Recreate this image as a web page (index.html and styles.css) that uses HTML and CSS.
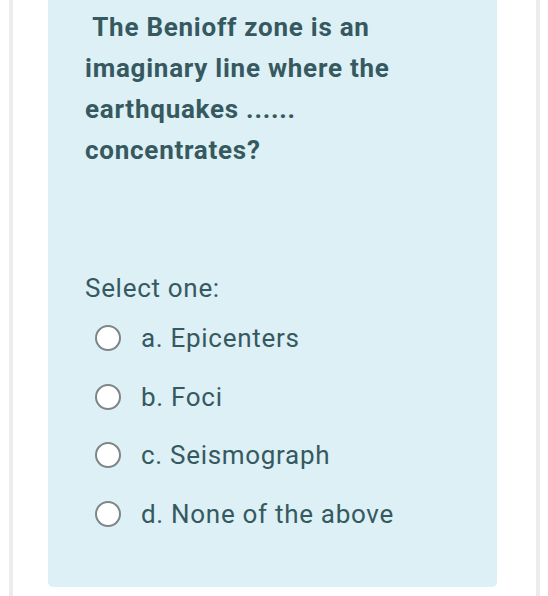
FILE: index.html
```html
<!DOCTYPE html>
<html>
<head>
<meta charset="utf-8">
<link rel="stylesheet" href="styles.css">
</head>
<body>
<div class="card">
  <div class="formulation">
    <div class="qtext">&nbsp;The Benioff zone is an imaginary line where the earthquakes ...... concentrates?</div>
    <div class="prompt">Select one:</div>
    <div class="answers">
      <label class="opt"><span class="radio"></span><span class="label">a. Epicenters</span></label>
      <label class="opt"><span class="radio"></span><span class="label">b. Foci</span></label>
      <label class="opt"><span class="radio"></span><span class="label">c. Seismograph</span></label>
      <label class="opt"><span class="radio"></span><span class="label">d. None of the above</span></label>
    </div>
  </div>
</div>
</body>
</html>
```
FILE: styles.css
```css
html, body {
  margin: 0;
  padding: 0;
  background: #ffffff;
}
body {
  font-family: Roboto, "Liberation Sans", sans-serif;
  color: #36595f;
}
.card {
  margin-left: 9px;
  width: 523px;
  height: 596px;
  border-left: 4px solid #ececec;
  border-right: 4px solid #ececec;
  box-sizing: content-box;
}
.formulation {
  margin-left: 35px;
  width: 449px;
  height: 587px;
  background: #dcf0f6;
  border-radius: 0 0 5px 5px;
  box-sizing: border-box;
  padding: 7px 10px 0 37px;
}
.qtext {
  font-weight: 700;
  font-size: 26px;
  letter-spacing: 0.75px;
  line-height: 41px;
  width: 330px;
}
.prompt {
  margin-top: 102px;
  font-size: 26px;
  letter-spacing: 0.7px;
  line-height: 30px;
}
.answers {
  margin-top: 6px;
  display: flex;
  flex-direction: column;
}
.opt {
  display: flex;
  align-items: center;
  height: 58.5px;
}
.radio {
  width: 22px;
  height: 22px;
  border: 2px solid #7e8587;
  border-radius: 50%;
  background: #ffffff;
  margin-left: 10px;
  margin-right: 20px;
  flex: none;
}
.label {
  font-size: 26px;
  letter-spacing: 0.7px;
}
```
